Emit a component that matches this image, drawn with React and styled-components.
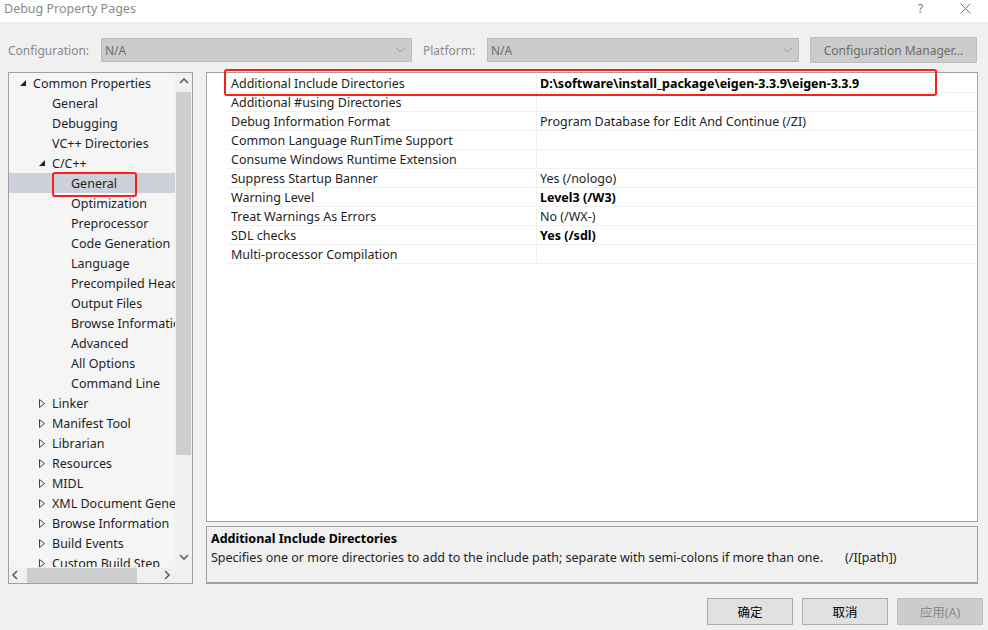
import React from "react";
import styled, { createGlobalStyle } from "styled-components";

const GlobalStyle = createGlobalStyle`
  html, body {
    margin: 0;
    padding: 0;
    background: #f0f0f0;
  }
  * {
    box-sizing: border-box;
  }
  body {
    font-family: "Noto Sans", "Noto Sans CJK SC", sans-serif;
    font-size: 12px;
    color: #000;
  }
`;

const treeItems = [
  { label: "Common Properties", level: 0, arrow: "open" },
  { label: "General", level: 1 },
  { label: "Debugging", level: 1 },
  { label: "VC++ Directories", level: 1 },
  { label: "C/C++", level: 1, arrow: "open" },
  { label: "General", level: 2, selected: true },
  { label: "Optimization", level: 2 },
  { label: "Preprocessor", level: 2 },
  { label: "Code Generation", level: 2 },
  { label: "Language", level: 2 },
  { label: "Precompiled Headers", level: 2 },
  { label: "Output Files", level: 2 },
  { label: "Browse Information", level: 2 },
  { label: "Advanced", level: 2 },
  { label: "All Options", level: 2 },
  { label: "Command Line", level: 2 },
  { label: "Linker", level: 1, arrow: "closed" },
  { label: "Manifest Tool", level: 1, arrow: "closed" },
  { label: "Librarian", level: 1, arrow: "closed" },
  { label: "Resources", level: 1, arrow: "closed" },
  { label: "MIDL", level: 1, arrow: "closed" },
  { label: "XML Document Generator", level: 1, arrow: "closed" },
  { label: "Browse Information", level: 1, arrow: "closed" },
  { label: "Build Events", level: 1, arrow: "closed" },
  { label: "Custom Build Step", level: 1, arrow: "closed" },
];

const properties = [
  { name: "Additional Include Directories", value: "D:\\software\\install_package\\eigen-3.3.9\\eigen-3.3.9", bold: true },
  { name: "Additional #using Directories", value: "" },
  { name: "Debug Information Format", value: "Program Database for Edit And Continue (/ZI)" },
  { name: "Common Language RunTime Support", value: "" },
  { name: "Consume Windows Runtime Extension", value: "" },
  { name: "Suppress Startup Banner", value: "Yes (/nologo)" },
  { name: "Warning Level", value: "Level3 (/W3)", bold: true },
  { name: "Treat Warnings As Errors", value: "No (/WX-)" },
  { name: "SDL checks", value: "Yes (/sdl)", bold: true },
  { name: "Multi-processor Compilation", value: "" },
];

const Window = styled.div`
  width: 988px;
  height: 630px;
  background: #f0f0f0;
  display: flex;
  flex-direction: column;
  overflow: hidden;
`;

const TitleBar = styled.div`
  height: 22px;
  background: #fff;
  display: flex;
  align-items: center;
  padding: 0 0 0 4px;
  color: #8a8a8a;
  font-size: 12.5px;
`;

const Title = styled.span`
  flex: 1;
  margin-top: -6px;
`;

const TitleButton = styled.span`
  width: 45px;
  display: flex;
  justify-content: center;
  margin-top: -6px;
  color: #777;
  font-size: 12px;
`;

const ConfigRow = styled.div`
  display: flex;
  align-items: center;
  height: 28px;
  margin-top: 14px;
  padding: 0 11px 0 8px;
`;

const Label = styled.span`
  color: #8a8a8a;
  width: ${(p) => p.$w}px;
`;

const Select = styled.div`
  width: ${(p) => p.$w}px;
  height: 24px;
  background: #cccccc;
  border: 1px solid #bcbcbc;
  display: flex;
  align-items: center;
  justify-content: space-between;
  padding: 0 6px 0 3px;
  color: #6d6d6d;
  margin-right: ${(p) => p.$mr}px;
`;

const Chevron = styled.svg`
  width: 9px;
  height: 6px;
`;

const ManagerButton = styled.div`
  width: 167px;
  height: 26px;
  background: #cccccc;
  border: 1px solid #bfbfbf;
  display: flex;
  align-items: center;
  justify-content: center;
  color: #6d6d6d;
  margin-left: auto;
`;

const Main = styled.div`
  display: flex;
  gap: 13px;
  padding: 0 10px 0 8px;
  margin-top: 8px;
  height: 512px;
`;

const TreePanel = styled.div`
  position: relative;
  width: 185px;
  height: 512px;
  border: 1px solid #a0a0a0;
  background: #f0f0f0;
  display: grid;
  grid-template-columns: 1fr 17px;
  grid-template-rows: 1fr 16px;
`;

const TreeList = styled.div`
  background: #f5f5f5;
  overflow: hidden;
`;

const TreeRow = styled.div`
  height: 20px;
  display: flex;
  align-items: center;
  white-space: nowrap;
  padding-left: ${(p) => 7 + p.$level * 19}px;
  background: ${(p) => (p.$selected ? "#cdd0da" : "transparent")};
  color: #1e1e1e;
  font-size: 12.5px;
`;

const Arrow = styled.span`
  width: 17px;
  flex: none;
  display: flex;
  align-items: center;
  justify-content: center;
  padding-right: 4px;
`;

const VScroll = styled.div`
  display: flex;
  flex-direction: column;
  align-items: center;
  background: #f0f0f0;
`;

const ScrollArrow = styled.div`
  height: 18px;
  display: flex;
  align-items: center;
  justify-content: center;
`;

const Spacer = styled.div`
  flex: 1;
`;

const VThumb = styled.div`
  width: 15px;
  height: 363px;
  background: #cdcdcd;
  margin-top: 1px;
`;

const HScroll = styled.div`
  display: flex;
  align-items: center;
  background: #f0f0f0;
  padding: 0 2px;
`;

const HThumb = styled.div`
  width: 110px;
  height: 15px;
  background: #cdcdcd;
  margin: 0 auto 0 6px;
`;

const Corner = styled.div`
  background: #f0f0f0;
`;

const RightColumn = styled.div`
  flex: 1;
  display: flex;
  flex-direction: column;
  gap: 4px;
`;

const Grid = styled.div`
  position: relative;
  height: 450px;
  background: #fff;
  border: 1px solid #a0a0a0;
  padding: 1px 1px 0 20px;
`;

const PropRow = styled.div`
  display: grid;
  grid-template-columns: 309px 1fr;
  height: 19px;
  border-bottom: 1px solid #f0f0f0;
  font-size: 12.5px;
  color: #1e1e1e;
`;

const Cell = styled.div`
  display: flex;
  align-items: center;
  padding-left: ${(p) => (p.$value ? 3 : 4)}px;
  white-space: nowrap;
  font-weight: ${(p) => (p.$bold ? 700 : 400)};
  color: ${(p) => (p.$bold ? "#000" : "#1e1e1e")};
  border-left: ${(p) => (p.$value ? "1px solid #f0f0f0" : "none")};
`;

const Highlight = styled.div`
  position: absolute;
  border: 2px solid #f7201a;
  border-radius: 3px;
  pointer-events: none;
`;

const Description = styled.div`
  height: 58px;
  border: 1px solid #a0a0a0;
  border-bottom: 2px solid #a0a0a0;
  padding: 2px 4px;
  color: #1e1e1e;
  font-size: 12.5px;
`;

const DescTitle = styled.div`
  font-weight: 700;
  color: #000;
  line-height: 19px;
`;

const DescText = styled.div`
  display: flex;
  line-height: 19px;
  white-space: nowrap;
`;

const Switch = styled.span`
  margin-left: 22px;
`;

const Footer = styled.div`
  display: flex;
  justify-content: flex-end;
  gap: 9px;
  padding: 14px 5px 0 0;
`;

const Button = styled.div`
  width: 86px;
  height: 27px;
  border: 1px solid ${(p) => (p.$disabled ? "#bfbfbf" : "#adadad")};
  background: ${(p) => (p.$disabled ? "#cccccc" : "#e1e1e1")};
  color: ${(p) => (p.$disabled ? "#8a8a8a" : "#000")};
  display: flex;
  align-items: center;
  justify-content: center;
  font-size: 12.5px;
`;

const OpenArrow = () => (
  <svg width="6" height="6" viewBox="0 0 6 6">
    <path d="M6 0 L6 6 L0 6 Z" fill="#262626" />
  </svg>
);

const ClosedArrow = () => (
  <svg width="6" height="9" viewBox="0 0 6 9">
    <path d="M0.5 0.5 L5.5 4.5 L0.5 8.5 Z" fill="none" stroke="#404040" />
  </svg>
);

const Caret = ({ dir }) => {
  const paths = {
    up: "M1 6 L5 2 L9 6",
    down: "M1 2 L5 6 L9 2",
    left: "M6 1 L2 5 L6 9",
    right: "M2 1 L6 5 L2 9",
  };
  return (
    <svg width="10" height="10" viewBox="0 0 10 10">
      <path d={paths[dir]} fill="none" stroke="#606060" strokeWidth="1.6" />
    </svg>
  );
};

const CloseIcon = () => (
  <svg width="11" height="11" viewBox="0 0 11 11">
    <path d="M0.5 0.5 L10.5 10.5 M10.5 0.5 L0.5 10.5" stroke="#777" strokeWidth="1" />
  </svg>
);

export default function App() {
  return (
    <>
      <GlobalStyle />
      <Window>
        <TitleBar>
          <Title>Debug Property Pages</Title>
          <TitleButton>?</TitleButton>
          <TitleButton>
            <CloseIcon />
          </TitleButton>
        </TitleBar>

        <ConfigRow>
          <Label $w={93}>Configuration:</Label>
          <Select $w={311} $mr={11}>
            N/A
            <Chevron viewBox="0 0 9 6">
              <path d="M0.5 1 L4.5 5 L8.5 1" fill="none" stroke="#9a9a9a" />
            </Chevron>
          </Select>
          <Label $w={64}>Platform:</Label>
          <Select $w={312} $mr={0}>
            N/A
            <Chevron viewBox="0 0 9 6">
              <path d="M0.5 1 L4.5 5 L8.5 1" fill="none" stroke="#9a9a9a" />
            </Chevron>
          </Select>
          <ManagerButton>Configuration Manager...</ManagerButton>
        </ConfigRow>

        <Main>
          <TreePanel>
            <TreeList>
              {treeItems.map((item, i) => (
                <TreeRow key={i} $level={item.level} $selected={item.selected}>
                  <Arrow>
                    {item.arrow === "open" && <OpenArrow />}
                    {item.arrow === "closed" && <ClosedArrow />}
                  </Arrow>
                  {item.label}
                </TreeRow>
              ))}
            </TreeList>
            <VScroll>
              <ScrollArrow>
                <Caret dir="up" />
              </ScrollArrow>
              <VThumb />
              <Spacer />
              <ScrollArrow>
                <Caret dir="down" />
              </ScrollArrow>
            </VScroll>
            <HScroll>
              <Caret dir="left" />
              <HThumb />
              <Caret dir="right" />
            </HScroll>
            <Corner />
            <Highlight style={{ left: 43, top: 99, width: 85, height: 25 }} />
          </TreePanel>

          <RightColumn>
            <Grid>
              {properties.map((p) => (
                <PropRow key={p.name}>
                  <Cell>{p.name}</Cell>
                  <Cell $value $bold={p.bold}>
                    {p.value}
                  </Cell>
                </PropRow>
              ))}
              <Highlight style={{ left: 17, top: -4, width: 713, height: 27 }} />
            </Grid>
            <Description>
              <DescTitle>Additional Include Directories</DescTitle>
              <DescText>
                Specifies one or more directories to add to the include path; separate with
                semi-colons if more than one.
                <Switch>(/I[path])</Switch>
              </DescText>
            </Description>
          </RightColumn>
        </Main>

        <Footer>
          <Button>确定</Button>
          <Button>取消</Button>
          <Button $disabled>应用(A)</Button>
        </Footer>
      </Window>
    </>
  );
}
